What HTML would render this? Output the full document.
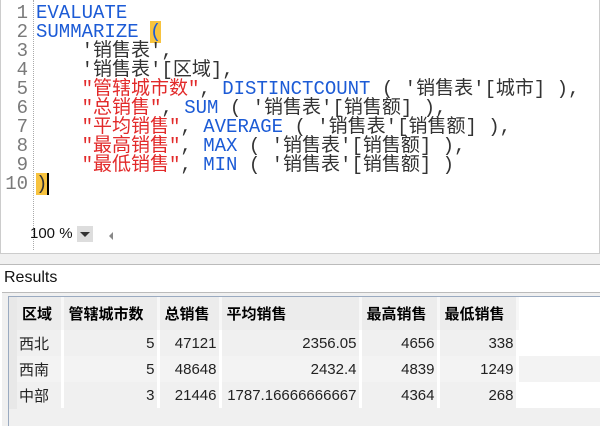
<html><head><style>
body{margin:0;width:600px;height:425px;background:#fff;position:relative;overflow:hidden;font-family:"Liberation Sans","Noto Sans CJK SC",sans-serif}
.code{position:absolute;left:0;top:4px;font-family:"Liberation Mono","Noto Sans CJK SC",monospace;font-size:19px;line-height:19px;white-space:pre}
.ln{position:absolute;left:0;width:28px;text-align:right;color:#7a7a7a}
.tx{position:absolute;left:36px}
.k{color:#1c5bd6}.s{color:#e22a2a}.d{color:#333}
.gut{position:absolute;left:33px;top:0;height:250px;border-left:1px dotted #aaa}
table{border-collapse:collapse;table-layout:fixed;width:583px;position:absolute;left:17px;top:297px;font-size:15px}
td,th{height:26px;padding:0 2px;border-right:3px solid #fff;white-space:nowrap;overflow:hidden;box-sizing:border-box}
th{background:#ececec;font-weight:bold;height:33px;text-align:left;padding:0 5px;border-right:3px solid #f7f7f7;font-size:15px}
td{text-align:right;color:#222}
td.l{text-align:left}
tr.g td{background:#f3f3f3}
</style></head><body>
<div style="position:absolute;left:0;top:0;width:598px;height:253px;border:1px solid #ccc;border-top:none"></div>
<div class="gut"></div>
<div class="code">
<div class="ln" style="top:0">1</div><div class="tx k" style="top:0">EVALUATE</div>
<div class="ln" style="top:19px">2</div><div class="tx k" style="top:19px">SUMMARIZE <span style="background:#f7c33f">(</span></div>
<div class="ln" style="top:38px">3</div><div class="tx d" style="top:38px">    '销售表',</div>
<div class="ln" style="top:57px">4</div><div class="tx d" style="top:57px">    '销售表'[区域],</div>
<div class="ln" style="top:76px">5</div><div class="tx d" style="top:76px">    <span class="s">"管辖城市数"</span>, <span class="k">DISTINCTCOUNT</span> ( '销售表'[城市] ),</div>
<div class="ln" style="top:95px">6</div><div class="tx d" style="top:95px">    <span class="s">"总销售"</span>, <span class="k">SUM</span> ( '销售表'[销售额] ),</div>
<div class="ln" style="top:114px">7</div><div class="tx d" style="top:114px">    <span class="s">"平均销售"</span>, <span class="k">AVERAGE</span> ( '销售表'[销售额] ),</div>
<div class="ln" style="top:133px">8</div><div class="tx d" style="top:133px">    <span class="s">"最高销售"</span>, <span class="k">MAX</span> ( '销售表'[销售额] ),</div>
<div class="ln" style="top:152px">9</div><div class="tx d" style="top:152px">    <span class="s">"最低销售"</span>, <span class="k">MIN</span> ( '销售表'[销售额] )</div>
<div class="ln" style="top:171px">10</div><div class="tx d" style="top:171px"><span style="background:#f7c33f">)</span><span style="border-left:2px solid #000"></span></div>
</div>
<div style="position:absolute;left:30px;top:225px;font-size:15px;color:#111">100 %</div>
<div style="position:absolute;left:77px;top:226px;width:16px;height:16px;background:#ddd"></div>
<div style="position:absolute;left:80px;top:232px;border:5px solid transparent;border-top:5px solid #333;border-bottom:none"></div>
<div style="position:absolute;left:109px;top:232px;border:4px solid transparent;border-right:4px solid #888;border-left:none"></div>
<div style="position:absolute;left:0;top:254px;width:600px;height:10px;background:#f0f0f0;border-bottom:1px solid #bbb"></div>
<div style="position:absolute;left:4px;top:269px;font-size:16px;color:#111">Results</div>
<div style="position:absolute;left:2px;top:292px;width:598px;height:133px;background:#f0f0f0;border-top:1px solid #bbb"></div>
<div style="position:absolute;left:8px;top:296px;width:592px;height:129px;background:#f0f0f0;border-top:1px solid #9aaac0;border-left:1px solid #9aaac0"></div>
<div style="position:absolute;left:9px;top:297px;width:8px;height:112px;background:#e8e8e8"></div>
<table>
<colgroup><col style="width:45px"><col style="width:96px"><col style="width:62px"><col style="width:140px"><col style="width:78px"><col style="width:79px"><col style="width:83px"></colgroup>
<tr><th>区域</th><th>管辖城市数</th><th>总销售</th><th>平均销售</th><th>最高销售</th><th>最低销售</th><th style="background:#fff;border:none"></th></tr>
<tr><td class="l">西北</td><td>5</td><td>47121</td><td>2356.05</td><td>4656</td><td>338</td><td style="background:#fff;border:none"></td></tr>
<tr class="g"><td class="l">西南</td><td>5</td><td>48648</td><td>2432.4</td><td>4839</td><td>1249</td><td style="border:none"></td></tr>
<tr><td class="l">中部</td><td>3</td><td>21446</td><td>1787.16666666667</td><td>4364</td><td>268</td><td style="background:#fff;border:none"></td></tr>
</table>
</body></html>
